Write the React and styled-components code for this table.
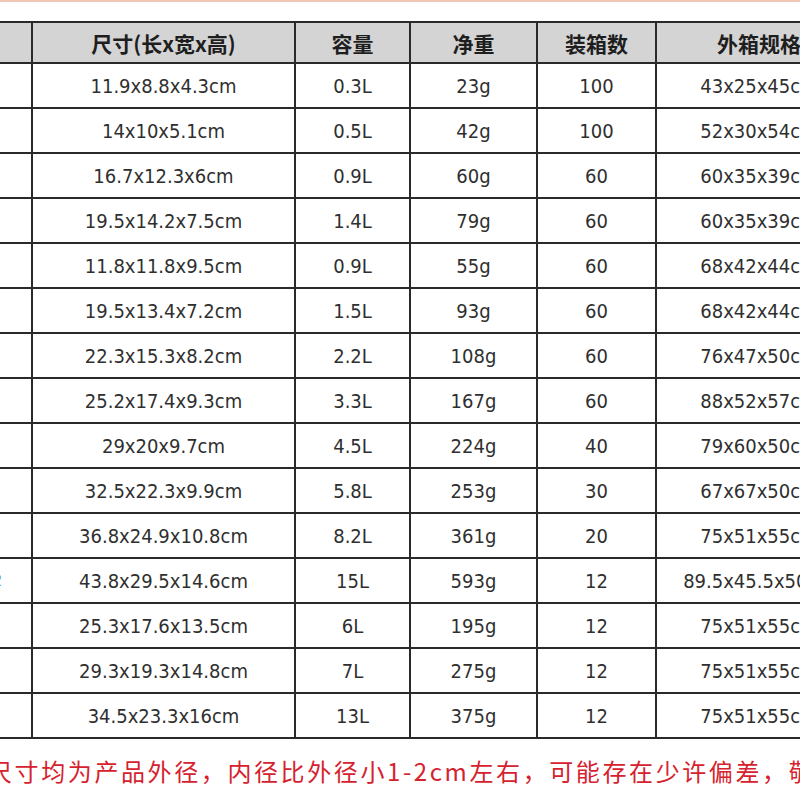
import React from 'react';
import styled, { createGlobalStyle } from 'styled-components';

const rows = [
    ['11.9x8.8x4.3cm', '0.3L', '23g', '100', '43x25x45cm'],
    ['14x10x5.1cm', '0.5L', '42g', '100', '52x30x54cm'],
    ['16.7x12.3x6cm', '0.9L', '60g', '60', '60x35x39cm'],
    ['19.5x14.2x7.5cm', '1.4L', '79g', '60', '60x35x39cm'],
    ['11.8x11.8x9.5cm', '0.9L', '55g', '60', '68x42x44cm'],
    ['19.5x13.4x7.2cm', '1.5L', '93g', '60', '68x42x44cm'],
    ['22.3x15.3x8.2cm', '2.2L', '108g', '60', '76x47x50cm'],
    ['25.2x17.4x9.3cm', '3.3L', '167g', '60', '88x52x57cm'],
    ['29x20x9.7cm', '4.5L', '224g', '40', '79x60x50cm'],
    ['32.5x22.3x9.9cm', '5.8L', '253g', '30', '67x67x50cm'],
    ['36.8x24.9x10.8cm', '8.2L', '361g', '20', '75x51x55cm'],
    ['43.8x29.5x14.6cm', '15L', '593g', '12', '89.5x45.5x50cm'],
    ['25.3x17.6x13.5cm', '6L', '195g', '12', '75x51x55cm'],
    ['29.3x19.3x14.8cm', '7L', '275g', '12', '75x51x55cm'],
    ['34.5x23.3x16cm', '13L', '375g', '12', '75x51x55cm'],
]

const heads = ['尺寸(长x宽x高)', '容量', '净重', '装箱数', '外箱规格']
const widths = [33, 263, 115, 127, 119, 206]

const App = () => {
    return (
        <>
            <GlobalStyle />
            <Page>
                <TopRule />
                <SpecTable>
                    <colgroup>
                        {widths.map((w, i) => <col key={i} style={{ width: w }} />)}
                    </colgroup>
                    <thead>
                        <tr>
                            <HeadCell $edge />
                            {heads.map((h) => <HeadCell key={h}>{h}</HeadCell>)}
                        </tr>
                    </thead>
                    <tbody>
                        {rows.map((r, i) => (
                            <tr key={i}>
                                <Cell $edge>{i === 11 ? <Mark>2</Mark> : null}</Cell>
                                {r.map((v, j) => <Cell key={j}>{v}</Cell>)}
                            </tr>
                        ))}
                    </tbody>
                </SpecTable>
                <Note>尺寸均为产品外径，内径比外径小1-2cm左右，可能存在少许偏差，敬请谅解</Note>
            </Page>
        </>
    )
}

export default App

const GlobalStyle = createGlobalStyle`
    html, body {
        margin: 0;
        padding: 0;
        background: #fff;
        overflow: hidden;
    }
`

const Page = styled.div`
    width: 800px;
    height: 800px;
    overflow: hidden;
    background: #fff;
`

const TopRule = styled.div`
    height: 2px;
    background: #f3c7b6;
    margin-bottom: 19px;
`

const SpecTable = styled.table`
    border-collapse: collapse;
    table-layout: fixed;
    width: 863px;
    margin-left: -1px;
    font-family: "DejaVu Sans Condensed", "DejaVu Sans", "Noto Sans CJK SC", sans-serif;
`

const HeadCell = styled.th`
    height: 39px;
    padding: 0;
    background: #d4d4d4;
    border: 2px solid #2a2a2a;
    border-left-width: ${(p) => (p.$edge ? '0' : '2px')};
    font-family: "Noto Sans CJK SC", sans-serif;
    font-size: 21px;
    font-weight: 700;
    color: #1e1e1e;
    text-align: center;
    white-space: nowrap;
`

const Cell = styled.td`
    height: 43px;
    padding: 0;
    border: 2px solid #2a2a2a;
    border-left-width: ${(p) => (p.$edge ? '0' : '2px')};
    font-size: 20px;
    color: #2f2f2f;
    text-align: center;
    white-space: nowrap;
    overflow: hidden;
`

const Mark = styled.span`
    display: block;
    text-align: left;
    margin-left: -6px;
    color: #5a9bd8;
    font-size: 16px;
`

const Note = styled.div`
    margin-top: 15px;
    margin-left: -12px;
    font-family: "Noto Sans CJK SC", sans-serif;
    font-size: 24px;
    line-height: 34px;
    color: #d6222e;
    white-space: nowrap;
    letter-spacing: 2.6px;
`
